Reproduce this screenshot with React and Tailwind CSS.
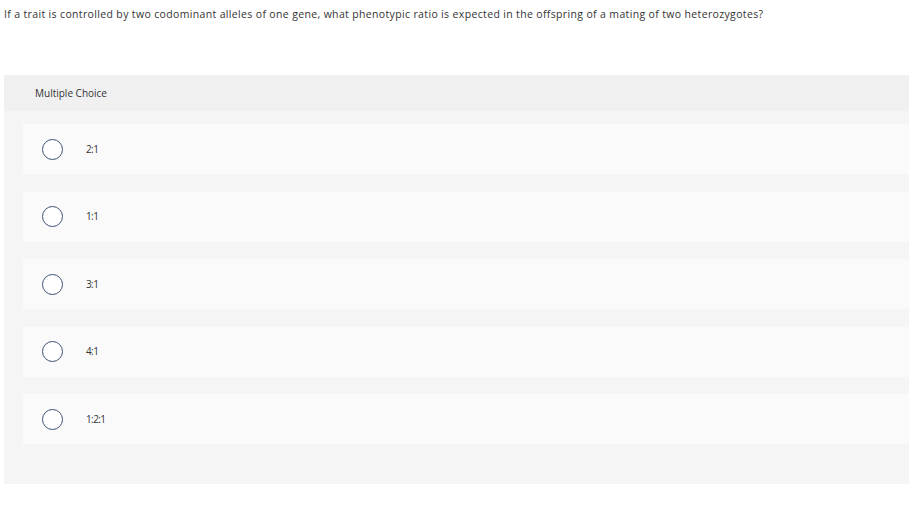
export default function App() {
  const options = ['2:1', '1:1', '3:1', '4:1', '1:2:1'];

  return (
    <div className="min-h-[511px] bg-white text-[#333] font-['Open_Sans',sans-serif]">
      <p className="pl-[4px] pt-[8px] text-[10.5px] leading-[12px] tracking-[0.35px]">
        If a trait is controlled by two codominant alleles of one gene, what phenotypic ratio is expected in the offspring of a mating of two heterozygotes?
      </p>

      <div className="ml-[4px] mt-[55px] bg-[#f5f5f5]">
        <div className="h-[36px] bg-[#f0f0f0] pl-[31px] flex items-center text-[10px]">
          Multiple Choice
        </div>
        <div className="pl-[19px] pt-[13px] pb-[40px] flex flex-col gap-[17.5px]">
          {options.map((opt) => (
            <div key={opt} className="h-[50px] bg-[#fafafa] flex items-center">
              <span className="ml-[19px] w-[21px] h-[21px] rounded-full border-[1.5px] border-[#3d5370] bg-white" />
              <span className="ml-[23px] text-[10px] tracking-[-0.6px]">{opt}</span>
            </div>
          ))}
        </div>
      </div>
    </div>
  );
}
